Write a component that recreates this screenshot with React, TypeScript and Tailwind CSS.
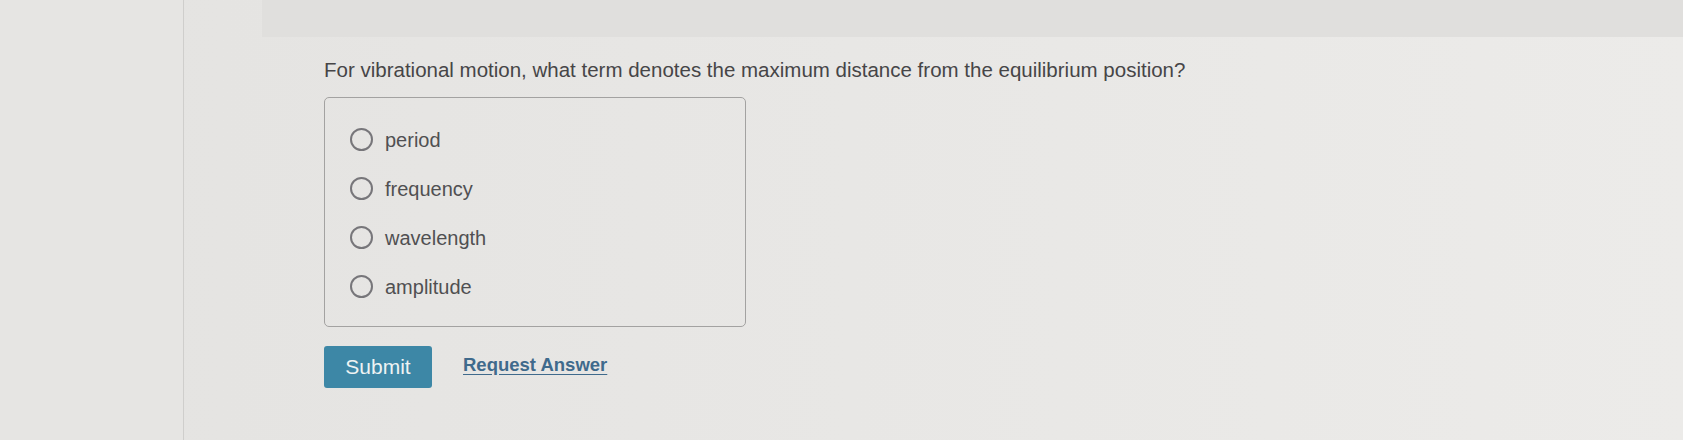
const options = ["period", "frequency", "wavelength", "amplitude"];

export default function App() {
  return (
    <div
      className="flex h-[440px] w-full overflow-hidden bg-gradient-to-r from-[#e4e3e1] via-[#e8e7e5] to-[#ecebe9] text-[#464547]"
      style={{ fontFamily: '"Liberation Sans", Arial, sans-serif' }}
    >
      {/* left nav rail */}
      <aside className="w-[184px] shrink-0 border-r border-[#cfcecc] bg-[#e6e5e3]" />

      <main className="flex-1">
        <div className="ml-[78px] h-[37px] bg-[#e0dfdd]" />

        <section className="pl-[140px] pt-[21px]">
          <p className="text-[20.5px] leading-[24px]">
            For vibrational motion, what term denotes the maximum distance from the equilibrium position?
          </p>

          <div className="mt-[15px] w-[422px] rounded-[5px] border border-[#a3a2a1] pb-[15px] pt-[17px]">
            {options.map((opt) => (
              <label key={opt} className="flex h-[49px] items-center pl-[25px]">
                <span className="h-[23px] w-[23px] rounded-full border-2 border-[#77767a]" />
                <span className="ml-[12px] text-[20px] text-[#505052]">{opt}</span>
              </label>
            ))}
          </div>

          <div className="mt-[19px] flex items-center">
            <button className="h-[42px] w-[108px] rounded-[3px] bg-[#3d87a6] text-[21px] text-[#eef3f3]">
              Submit
            </button>
            <a className="ml-[31px] -mt-[4px] text-[18.5px] font-bold text-[#3f6a8c] underline decoration-[#3f6a8c] underline-offset-[3px]">
              Request Answer
            </a>
          </div>
        </section>
      </main>
    </div>
  );
}
